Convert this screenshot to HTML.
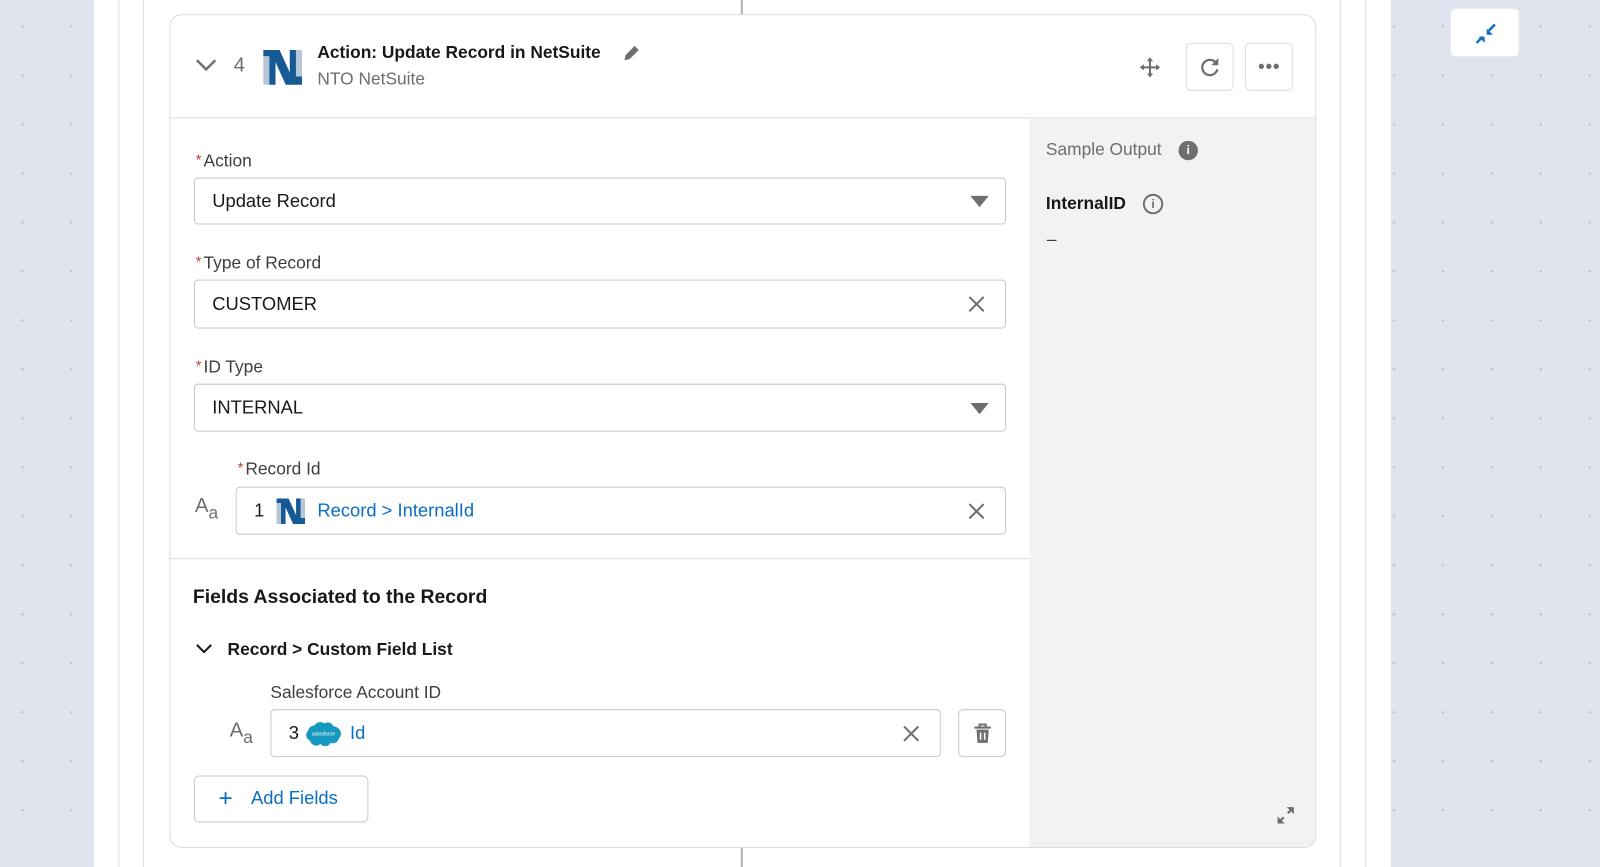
<!DOCTYPE html>
<html><head><meta charset="utf-8"><style>
*{box-sizing:border-box;margin:0;padding:0}
body{width:1600px;height:850px;overflow:hidden;background:#dfe4ee;font-family:"Liberation Sans",sans-serif;color:#181818;position:relative}
#w{position:absolute;left:0;top:0;width:1568px;height:833px;transform:scale(1.0204);transform-origin:0 0;
background-image:radial-gradient(circle,#b7bfcc 1px,transparent 1.3px);background-size:48px 48px;background-position:-2px 2px}
.a{position:absolute}
.panel{left:92px;top:0;width:1271px;height:850px;background:#fff}
.vl{top:0;height:850px;width:1px;background:#dcdcdc}
.card{left:166px;top:14px;width:1124px;height:817px;border:1px solid #dcdcdc;border-radius:12px;background:#fff;overflow:hidden}
.gray{left:842px;top:101px;width:282px;height:716px;background:#f2f2f2}
.lbl{font-size:17px;color:#3e3e3c}
.lbl b{color:#c23934;font-weight:normal;font-size:14px;vertical-align:top;margin-right:2px}
.inp{border:1px solid #c9c9c9;border-radius:4px;background:#fff;font-size:18px;padding-left:17px;display:flex;align-items:center}
.tri{position:absolute;right:16px;top:50%;margin-top:-5px;width:0;height:0;border-left:9px solid transparent;border-right:9px solid transparent;border-top:11px solid #706e6b}
.x{position:absolute;right:20px;top:50%;margin-top:-8px}
.btn{border:1px solid #dcdcdc;border-radius:5px;background:#fff}
.blue{color:#0b6ec5}
</style></head><body><div id="w">
<div class="a panel"></div>
<div class="a vl" style="left:116px"></div>
<div class="a vl" style="left:140px"></div>
<div class="a vl" style="left:1313px"></div>
<div class="a vl" style="left:1338px"></div>
<div class="a" style="left:726px;top:0;width:2px;height:14px;background:#b0b0b0"></div>
<div class="a" style="left:726px;top:830px;width:2px;height:20px;background:#b0b0b0"></div>
<div class="a btn" style="left:1421px;top:8px;width:68px;height:48px;border-color:#e8ecf2">
<svg class="a" style="left:23px;top:13px" width="22" height="22" viewBox="0 0 22 22"><g fill="#0b6ec5"><path d="M2 20 L8 14" stroke="#0b6ec5" stroke-width="2.4" fill="none"/><path d="M4 14 h6 v6z"/><path d="M20 2 L14 8" stroke="#0b6ec5" stroke-width="2.4"/><path d="M12 6 v6 h6z"/></g></svg></div>

<div class="a card">
 <svg class="a" style="left:24px;top:42px" width="22" height="14" viewBox="0 0 22 14"><path d="M2 2 L11 11 L20 2" stroke="#706e6b" stroke-width="2.4" fill="none"/></svg>
 <div class="a" style="left:62px;top:38px;font-size:20px;color:#706e6b">4</div>
 <svg class="a" style="left:91px;top:32px" width="38" height="38" viewBox="0 0 38 38"><rect x="0" y="2" width="12" height="34" fill="#b7c6d6"/><rect x="26" y="2" width="12" height="34" fill="#b7c6d6"/><path d="M0 2h16l10 22V2h6v26h6v8H22L12 14v22H6V8H0z" fill="#155a94"/></svg>
 <div class="a" style="left:144px;top:27px;font-size:17px;font-weight:bold">Action: Update Record in NetSuite</div>
 <svg class="a" style="left:442px;top:27px" width="20" height="20" viewBox="0 0 20 20"><path d="M3 17 L4 12 L13 3 L17 7 L8 16z" fill="#706e6b"/></svg>
 <div class="a" style="left:144px;top:53px;font-size:17px;color:#706e6b">NTO NetSuite</div>
 <svg class="a" style="left:949px;top:40px" width="22" height="22" viewBox="0 0 22 22"><g stroke="#706e6b" stroke-width="2" fill="#706e6b"><path d="M11 2v18M2 11h18"/><path d="M11 1l-3 4h6zM11 21l-3-4h6zM1 11l4-3v6zM21 11l-4-3v6z" stroke="none"/></g></svg>
 <div class="a btn" style="left:995px;top:27px;width:47px;height:47px"><svg class="a" style="left:12px;top:12px" width="22" height="22" viewBox="0 0 22 22"><path d="M17 7 A7.5 7.5 0 1 0 18 13" stroke="#706e6b" stroke-width="2.2" fill="none"/><path d="M19 2v7h-7z" fill="#706e6b"/></svg></div>
 <div class="a btn" style="left:1053px;top:27px;width:47px;height:47px"><div class="a" style="left:12px;top:12px;font-size:18px;color:#706e6b;letter-spacing:1px;font-weight:bold">•••</div></div>
 <div class="a" style="left:0;top:100px;width:1124px;height:1px;background:#dcdcdc"></div>
 <div class="a gray"></div>
 <div class="a" style="left:0;top:532px;width:842px;height:1px;background:#dcdcdc"></div>

 <div class="a lbl" style="left:25px;top:133px"><b>*</b>Action</div>
 <div class="a inp" style="left:23px;top:159px;width:796px;height:46px">Update Record<div class="tri"></div></div>
 <div class="a lbl" style="left:25px;top:233px"><b>*</b>Type of Record</div>
 <div class="a inp" style="left:23px;top:259px;width:796px;height:48px">CUSTOMER<svg class="x" width="16" height="16"><path d="M1 1L15 15M15 1L1 15" stroke="#706e6b" stroke-width="2"/></svg></div>
 <div class="a lbl" style="left:25px;top:335px"><b>*</b>ID Type</div>
 <div class="a inp" style="left:23px;top:361px;width:796px;height:47px">INTERNAL<div class="tri"></div></div>
 <div class="a lbl" style="left:66px;top:435px"><b>*</b>Record Id</div>
 <div class="a" style="left:24px;top:470px;font-size:20px;color:#706e6b">A<span style="font-size:17px;vertical-align:-6px">a</span></div>
 <div class="a inp" style="left:64px;top:462px;width:755px;height:47px">1<svg style="margin:0 12px 0 12px" width="28" height="28" viewBox="0 0 38 38"><rect x="0" y="2" width="12" height="34" fill="#b7c6d6"/><rect x="26" y="2" width="12" height="34" fill="#b7c6d6"/><path d="M0 2h16l10 22V2h6v26h6v8H22L12 14v22H6V8H0z" fill="#155a94"/></svg><span class="blue">Record &gt; InternalId</span><svg class="x" width="16" height="16"><path d="M1 1L15 15M15 1L1 15" stroke="#706e6b" stroke-width="2"/></svg></div>

 <div class="a" style="left:22px;top:560px;font-size:19px;font-weight:bold">Fields Associated to the Record</div>
 <svg class="a" style="left:25px;top:616px" width="16" height="10" viewBox="0 0 16 10"><path d="M1 1L8 8L15 1" stroke="#181818" stroke-width="2" fill="none"/></svg>
 <div class="a" style="left:56px;top:612px;font-size:17px;font-weight:bold">Record &gt; Custom Field List</div>
 <div class="a lbl" style="left:98px;top:654px">Salesforce Account ID</div>
 <div class="a" style="left:58px;top:690px;font-size:20px;color:#706e6b">A<span style="font-size:17px;vertical-align:-6px">a</span></div>
 <div class="a inp" style="left:98px;top:680px;width:657px;height:47px">3<svg style="margin:0 8px 0 6px" width="36" height="26" viewBox="0 0 36 26"><path d="M9 5a7 7 0 0 1 10-2a6 6 0 0 1 9 3a7 7 0 0 1 5 12a6 6 0 0 1-8 4a6 6 0 0 1-10 1a6 6 0 0 1-10-3a6 6 0 0 1-2-10a6 6 0 0 1 6-5z" fill="#1798c1"/><text x="18" y="15" font-size="5" fill="#fff" text-anchor="middle" font-family="Liberation Sans">salesforce</text></svg><span class="blue">Id</span><svg class="x" width="16" height="16"><path d="M1 1L15 15M15 1L1 15" stroke="#706e6b" stroke-width="2"/></svg></div>
 <div class="a btn" style="left:772px;top:680px;width:47px;height:47px;border-color:#c9c9c9"><svg class="a" style="left:14px;top:13px" width="18" height="20" viewBox="0 0 18 20"><path d="M1 4h16M6 4V1h6v3" stroke="#706e6b" stroke-width="2" fill="none"/><path d="M3 6h12l-1 13H4z" fill="#706e6b"/><path d="M7 9v7M11 9v7" stroke="#fff" stroke-width="1.5"/></svg></div>
 <div class="a btn" style="left:23px;top:745px;width:171px;height:46px;border-color:#c9c9c9"><span class="a blue" style="left:23px;top:8px;font-size:24px">+</span><span class="a blue" style="left:55px;top:11px;font-size:18px">Add Fields</span></div>

 <div class="a" style="left:858px;top:122px;font-size:17px;color:#706e6b">Sample Output</div>
 <div class="a" style="left:988px;top:123px;width:19px;height:19px;border-radius:50%;background:#706e6b;color:#fff;font-size:12px;font-weight:bold;text-align:center;line-height:19px">i</div>
 <div class="a" style="left:858px;top:175px;font-size:17px;font-weight:bold">InternalID</div>
 <div class="a" style="left:953px;top:175px;width:20px;height:20px;border-radius:50%;border:2px solid #706e6b;color:#706e6b;font-size:12px;font-weight:bold;text-align:center;line-height:16px">i</div>
 <div class="a" style="left:859px;top:210px;font-size:17px;color:#3e3e3c">–</div>
 <svg class="a" style="left:1083px;top:774px" width="20" height="20" viewBox="0 0 20 20"><path d="M3 17L8 12M17 3L12 8" stroke="#706e6b" stroke-width="2"/><path d="M2 11v7h7zM18 9V2h-7z" fill="#706e6b"/></svg>
</div>
</div></body></html>
